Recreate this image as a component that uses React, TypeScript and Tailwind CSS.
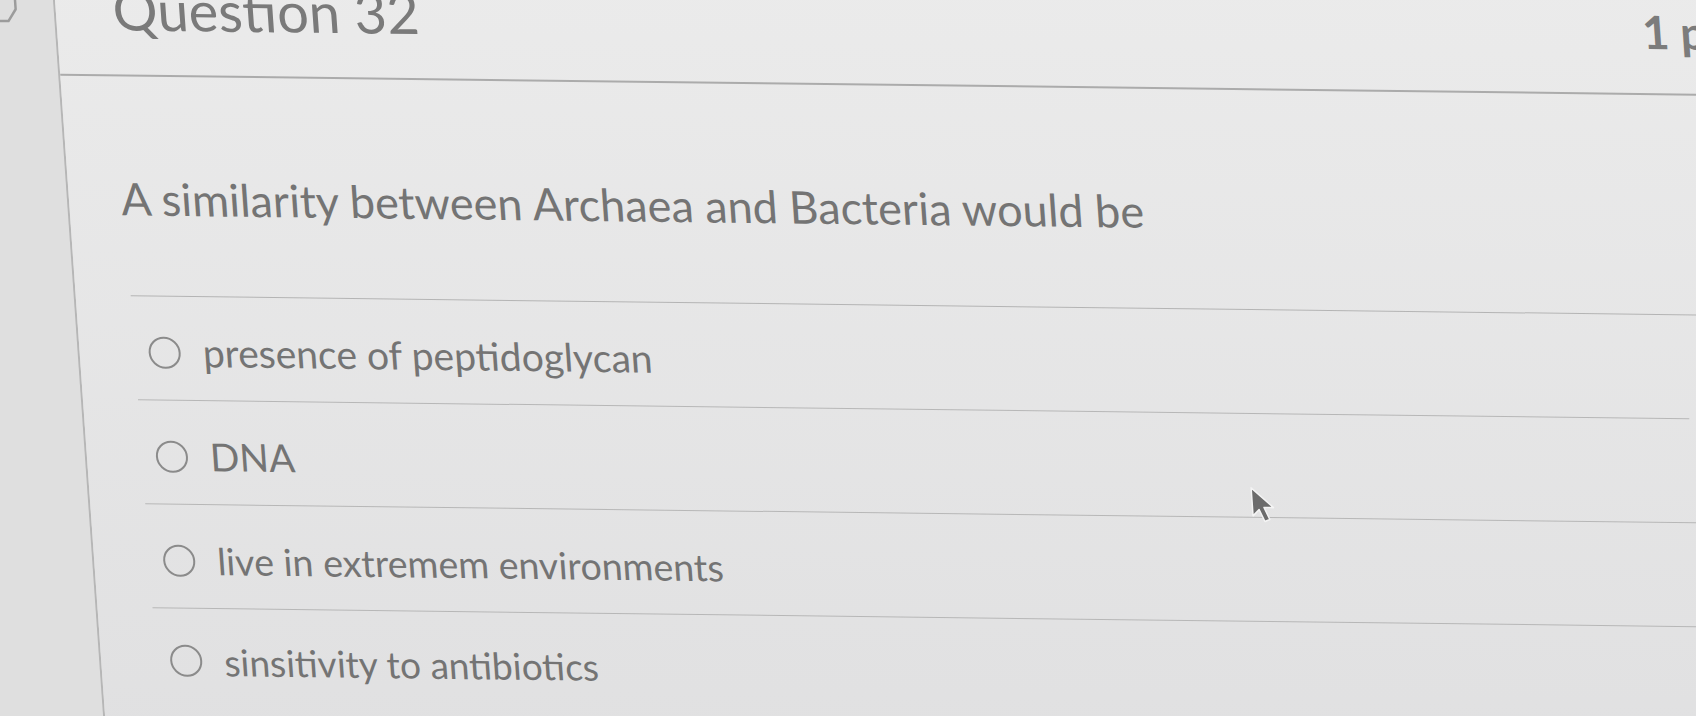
const options = [
  { label: 'presence of peptidoglycan', size: 'text-[39px]' },
  { label: 'DNA', size: 'text-[38.5px]' },
  { label: 'live in extremem environments', size: 'text-[37.5px]' },
  { label: 'sinsitivity to antibiotics', size: 'text-[37px]' },
];

function Radio() {
  return <span className="w-[32px] h-[32px] shrink-0 rounded-full border-[2.5px] border-[#8b8b8b]" />;
}

export default function App() {
  return (
    <div className="relative w-[1696px] h-[716px] overflow-hidden bg-[#dedede] font-[family-name:Lato,'Open_Sans',sans-serif] text-[#767676]">
      {/* photo of a monitor: slight skew to follow the camera angle */}
      <div className="relative -ml-[60px] -mt-[40px] w-[1820px] h-[800px] flex origin-[60px_40px] skew-x-[4deg] skew-y-[0.7deg]">
        <aside className="w-[115px] shrink-0 border-r-2 border-[#b6b6b6] bg-[#dfdfdf] pl-[40px] pt-[16px]">
          <svg width="37" height="47" viewBox="0 0 37 47" fill="none">
            <path d="M2 45 H27 L35 33 V2" stroke="#9c9c9c" strokeWidth="2.5" strokeLinejoin="round" />
          </svg>
        </aside>

        <main className="flex-1 flex flex-col bg-linear-to-b from-[#ebebeb] to-[#e0e0e1]">
          <header className="h-[115px] shrink-0 flex items-baseline pt-[20px] pl-[57px] pr-[19px] border-b-2 border-[#ababab]">
            <h1 className="text-[56px] leading-none text-[#7a7a7a]">Question 32</h1>
            <span className="ml-auto text-[46px] leading-none font-bold text-[#7c7c7c]">1 pts</span>
          </header>

          <div className="pl-[52px]">
            <p className="pt-[100px] pb-[74px] text-[45px] leading-none text-[#747474]">
              A similarity between Archaea and Bacteria would be
            </p>

            <div className="ml-[3px] border-t-[1.5px] border-[#b4b4b4]">
              {options.map((opt, i) => (
                <div
                  key={opt.label}
                  className={`mr-[100px] h-[104px] pl-[14px] flex items-center gap-[22px] ${
                    i < options.length - 1 ? 'pt-2 border-b-[1.5px] border-[#b7b7b7]' : 'pt-0'
                  }`}
                >
                  <Radio />
                  <span className={`${opt.size} leading-none text-[#747474]`}>{opt.label}</span>
                </div>
              ))}
            </div>
          </div>
        </main>

        {/* mouse pointer */}
        <svg className="absolute left-[1275px] top-[511px]" width="26" height="40" viewBox="0 0 26 40">
          <path d="M2 2 L2 30 L8.5 23.5 L13.5 35.5 L18.5 33.5 L13.5 21.5 L23 21.5 Z" fill="#6c6c6c" stroke="#f4f4f4" strokeWidth="1.5" strokeLinejoin="round" />
        </svg>
      </div>
    </div>
  );
}
